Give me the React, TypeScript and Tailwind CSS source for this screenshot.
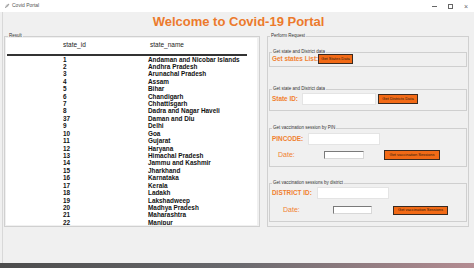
import React from "react";

const states: [string, string][] = [
  ["1", "Andaman and Nicobar Islands"],
  ["2", "Andhra Pradesh"],
  ["3", "Arunachal Pradesh"],
  ["4", "Assam"],
  ["5", "Bihar"],
  ["6", "Chandigarh"],
  ["7", "Chhattisgarh"],
  ["8", "Dadra and Nagar Haveli"],
  ["37", "Daman and Diu"],
  ["9", "Delhi"],
  ["10", "Goa"],
  ["11", "Gujarat"],
  ["12", "Haryana"],
  ["13", "Himachal Pradesh"],
  ["14", "Jammu and Kashmir"],
  ["15", "Jharkhand"],
  ["16", "Karnataka"],
  ["17", "Kerala"],
  ["18", "Ladakh"],
  ["19", "Lakshadweep"],
  ["20", "Madhya Pradesh"],
  ["21", "Maharashtra"],
  ["22", "Manipur"],
  ["23", "Meghalaya"],
];

const OrangeButton = ({ label, className }: { label: string; className: string }) => (
  <button className={`shrink-0 whitespace-nowrap bg-[#f26a16] border border-[#3a2a20] text-[4px] leading-none text-[#2a1a10] flex items-center justify-center ${className}`}>
    {label}
  </button>
);

const SubFrame = ({ title, className, children }: { title: string; className: string; children: React.ReactNode }) => (
  <fieldset className={`border border-[#cfcfcf] mx-[1px] ${className}`}>
    <legend className="ml-[2px] px-[1px] text-[4.5px] leading-[6px] text-[#333] whitespace-nowrap">{title}</legend>
    {children}
  </fieldset>
);

const label = "shrink-0 whitespace-nowrap font-bold text-[#f0802f] text-[6.4px]";
const dateLabel = "shrink-0 whitespace-nowrap text-[7px] text-[#f0802f]";
const entry = "shrink-0 h-[12px] bg-white border border-[#e4e4e4]";
const dateEntry = "shrink-0 h-[8px] bg-white border border-[#7a7a7a] border-r-[#d8d8d8] border-b-[#d8d8d8]";

export default function App() {
  return (
    <div className="w-[474px] h-[268px] flex flex-col bg-[#f0f0f0] overflow-hidden font-['Liberation_Sans',Arial,sans-serif]">
      {/* title bar */}
      <div className="h-[12px] bg-white flex items-center pl-[4px] pr-[6px] text-[#555]">
        <svg width="6" height="6" viewBox="0 0 12 12" className="mr-[2px]">
          <path d="M2 10 L10 2 M3 9 Q3 3 10 2 Q9 8 3 9 M5 7 L8 4" stroke="#8a8a8a" strokeWidth="1" fill="none" />
        </svg>
        <span className="text-[5px]">Covid Portal</span>
        <div className="ml-auto flex items-center gap-[11px] text-[7px] text-[#666]">
          <span className="w-[5px] h-[1px] bg-[#666]" />
          <span className="w-[5px] h-[5px] border border-[#666]" />
          <span className="leading-none">×</span>
        </div>
      </div>

      <div className="flex-1 flex flex-col border-l border-[#d8d8d8] ml-[2px]">
        <h1 className="h-[21px] pt-[1px] text-center text-[13px] leading-[18px] font-bold text-[#ec7a2c]">
          Welcome to Covid-19 Portal
        </h1>

        <div className="flex gap-[7px] pl-[1px]">
          {/* Result */}
          <fieldset className="w-[256px] h-[194px] border border-[#d0d0d0] px-[1px] pb-[1px]">
            <legend className="ml-[2px] px-[1px] text-[4.5px] leading-[6px] text-[#333]">Result</legend>
            <div className="h-[187px] w-[251px] bg-white overflow-hidden -mt-[1px]">
              <div className="flex pt-[3px] h-[10px] text-[6.5px] leading-[7px] text-[#222]">
                <span className="pl-[57px] w-[142px]">state_id</span>
                <span className="pl-[2px]">state_name</span>
              </div>
              <div className="mt-[6px] ml-[1px] w-[240px] h-[1.5px] bg-[#333]" />
              <div className="text-[6.4px] leading-[7.42px] font-bold text-[#111]">
                {states.map(([id, name]) => (
                  <div key={id} className="flex whitespace-nowrap">
                    <span className="pl-[57px] w-[142px]">{id}</span>
                    <span>{name}</span>
                  </div>
                ))}
              </div>
            </div>
          </fieldset>

          {/* Perform Request */}
          <fieldset className="w-[202px] h-[194px] border border-[#d0d0d0]">
            <legend className="ml-[2px] px-[1px] text-[4.5px] leading-[6px] text-[#333]">Perform Request</legend>

            <SubFrame title="Get state and District data" className="mt-[10px] pb-[2px]">
              <div className="flex items-center h-[10px] pl-[2px] -mt-[1px]">
                <span className={`${label} w-[46px]`}>Get states List:</span>
                <OrangeButton label="Get States Data" className="w-[35px] h-[10px]" />
              </div>
            </SubFrame>

            <SubFrame title="Get state and District data" className="mt-[19px] pb-[4px]">
              <div className="flex items-center h-[14px] pl-[2px]">
                <span className={`${label} w-[30px]`}>State ID:</span>
                <span className={`${entry} w-[74px]`} />
                <OrangeButton label="Get Districts Data" className="ml-[2px] w-[40px] h-[10px]" />
              </div>
            </SubFrame>

            <SubFrame title="Get vaccination session by PIN" className="mt-[14px] pb-[6px]">
              <div className="flex items-center h-[12px] mt-[2px] pl-[2px]">
                <span className={`${label} w-[36px]`}>PINCODE:</span>
                <span className={`${entry} w-[72px]`} />
              </div>
              <div className="flex items-center h-[10px] mt-[5px] pl-[8px]">
                <span className={`${dateLabel} w-[46px]`}>Date:</span>
                <span className={`${dateEntry} w-[40px]`} />
                <OrangeButton label="Get vaccination Sessions" className="ml-[20px] w-[56px] h-[10px]" />
              </div>
            </SubFrame>

            <SubFrame title="Get vaccination sessions by district" className="mt-[13px] pb-[6px]">
              <div className="flex items-center h-[12px] mt-[1px] pl-[2px]">
                <span className={`${label} w-[45px]`}>DISTRICT ID:</span>
                <span className={`${entry} w-[72px]`} />
              </div>
              <div className="flex items-center h-[10px] mt-[6px] pl-[13px]">
                <span className={`${dateLabel} w-[50px]`}>Date:</span>
                <span className={`${dateEntry} w-[39px]`} />
                <OrangeButton label="Get vaccination Sessions" className="ml-[21px] w-[55px] h-[9px]" />
              </div>
            </SubFrame>
          </fieldset>
        </div>
      </div>

      {/* taskbar strip */}
      <div className="h-[5px] bg-gradient-to-r from-[#4c4c4c] via-[#6a6a6e] to-[#b48c92]" />
    </div>
  );
}
